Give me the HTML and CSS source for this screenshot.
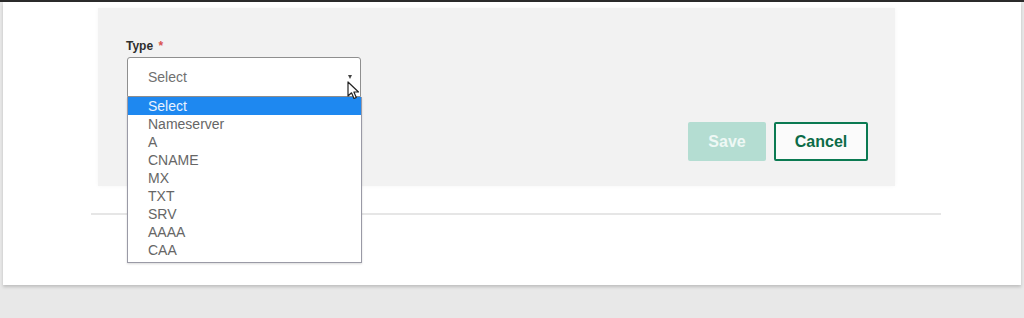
FILE: index.html
```html
<!DOCTYPE html>
<html lang="en">
<head>
    <meta charset="UTF-8">
    <title>Add Record</title>
    <link rel="stylesheet" href="styles.css">
</head>
<body>
    <div class="topbar"></div>
    <div class="card">
        <div class="panel">
            <div class="field">
                <label class="field-label">Type <span class="required">*</span></label>
                <div class="select-wrap">
                    <div class="select-box">
                        <span class="select-value">Select</span>
                        <span class="select-arrow"></span>
                    </div>
                    <ul class="options">
                        <li class="active">Select</li>
                        <li>Nameserver</li>
                        <li>A</li>
                        <li>CNAME</li>
                        <li>MX</li>
                        <li>TXT</li>
                        <li>SRV</li>
                        <li>AAAA</li>
                        <li>CAA</li>
                    </ul>
                    <svg class="cursor" width="13" height="19" viewBox="0 0 13 19">
                        <path d="M1 1 L1 15 L4.5 11.8 L7 17.5 L9.3 16.5 L6.9 11 L11.5 11 Z" fill="#fff" stroke="#222" stroke-width="1.2" stroke-linejoin="round"/>
                    </svg>
                </div>
            </div>
            <div class="actions">
                <button class="btn btn-save" disabled>Save</button>
                <button class="btn btn-cancel">Cancel</button>
            </div>
        </div>
        <div class="divider"></div>
    </div>
</body>
</html>
```

FILE: styles.css
```css
* {
    box-sizing: border-box;
    margin: 0;
    padding: 0;
}

body {
    background-color: #e8e8e8;
    font-family: 'Liberation Sans', Arial, sans-serif;
    color: #333;
    width: 1024px;
    height: 318px;
    overflow: hidden;
}

.topbar {
    height: 2px;
    background-color: #2b2b2b;
}

.card {
    margin: 0 3px;
    height: 283px;
    background-color: #fff;
    box-shadow: 0 2px 3px rgba(0, 0, 0, 0.18);
    padding-top: 6px;
}

.panel {
    margin-left: 95px;
    width: 797px;
    height: 178px;
    background-color: #f2f2f2;
    box-shadow: 0 0 4px rgba(0, 0, 0, 0.04);
    padding: 31px 27px 25px 29px;
    display: flex;
    flex-direction: column;
}

.field-label {
    display: block;
    font-size: 12px;
    font-weight: bold;
    color: #2f2f2f;
    line-height: 15px;
    margin-bottom: 3px;
    margin-left: -1px;
}

.required {
    color: #d9534f;
    margin-left: 2px;
}

.select-wrap {
    position: relative;
    width: 234px;
}

.select-box {
    height: 40px;
    background-color: #fff;
    border: 1px solid #8f8f8f;
    border-radius: 3px 3px 0 0;
    display: flex;
    align-items: center;
    justify-content: space-between;
    padding: 0 8px 0 20px;
}

.select-value {
    font-size: 14px;
    color: #707070;
}

.select-arrow {
    width: 0;
    height: 0;
    border-left: 2.5px solid transparent;
    border-right: 2.5px solid transparent;
    border-top: 4px solid #444;
}

.options {
    position: absolute;
    top: 40px;
    left: 0;
    width: 235px;
    list-style: none;
    background-color: #fff;
    border: 1px solid #9a9aa6;
    border-top: none;
    padding-bottom: 3px;
    box-shadow: 0 1px 2px rgba(0, 0, 0, 0.15);
    z-index: 2;
}

.options li {
    height: 18px;
    line-height: 18px;
    font-size: 14px;
    color: #666;
    padding-left: 20px;
}

.options li.active {
    background-color: #1e88f0;
    color: #e8f2ff;
}

.cursor {
    position: absolute;
    left: 220px;
    top: 24px;
    z-index: 3;
}

.actions {
    display: flex;
    justify-content: flex-end;
    gap: 8px;
    margin-top: 25px;
}

.btn {
    height: 39px;
    font-family: 'Liberation Sans', Arial, sans-serif;
    font-size: 16px;
    font-weight: bold;
    border-radius: 2px;
}

.btn-save {
    width: 78px;
    background-color: #b4ddd2;
    border: none;
    color: #eef8f5;
}

.btn-cancel {
    width: 94px;
    background-color: #fbfbfb;
    border: 2px solid #0b7a52;
    color: #0b6b47;
    cursor: pointer;
}

.divider {
    margin: 27px 0 0 88px;
    width: 850px;
    height: 2px;
    background-color: #e6e6e6;
}
```
